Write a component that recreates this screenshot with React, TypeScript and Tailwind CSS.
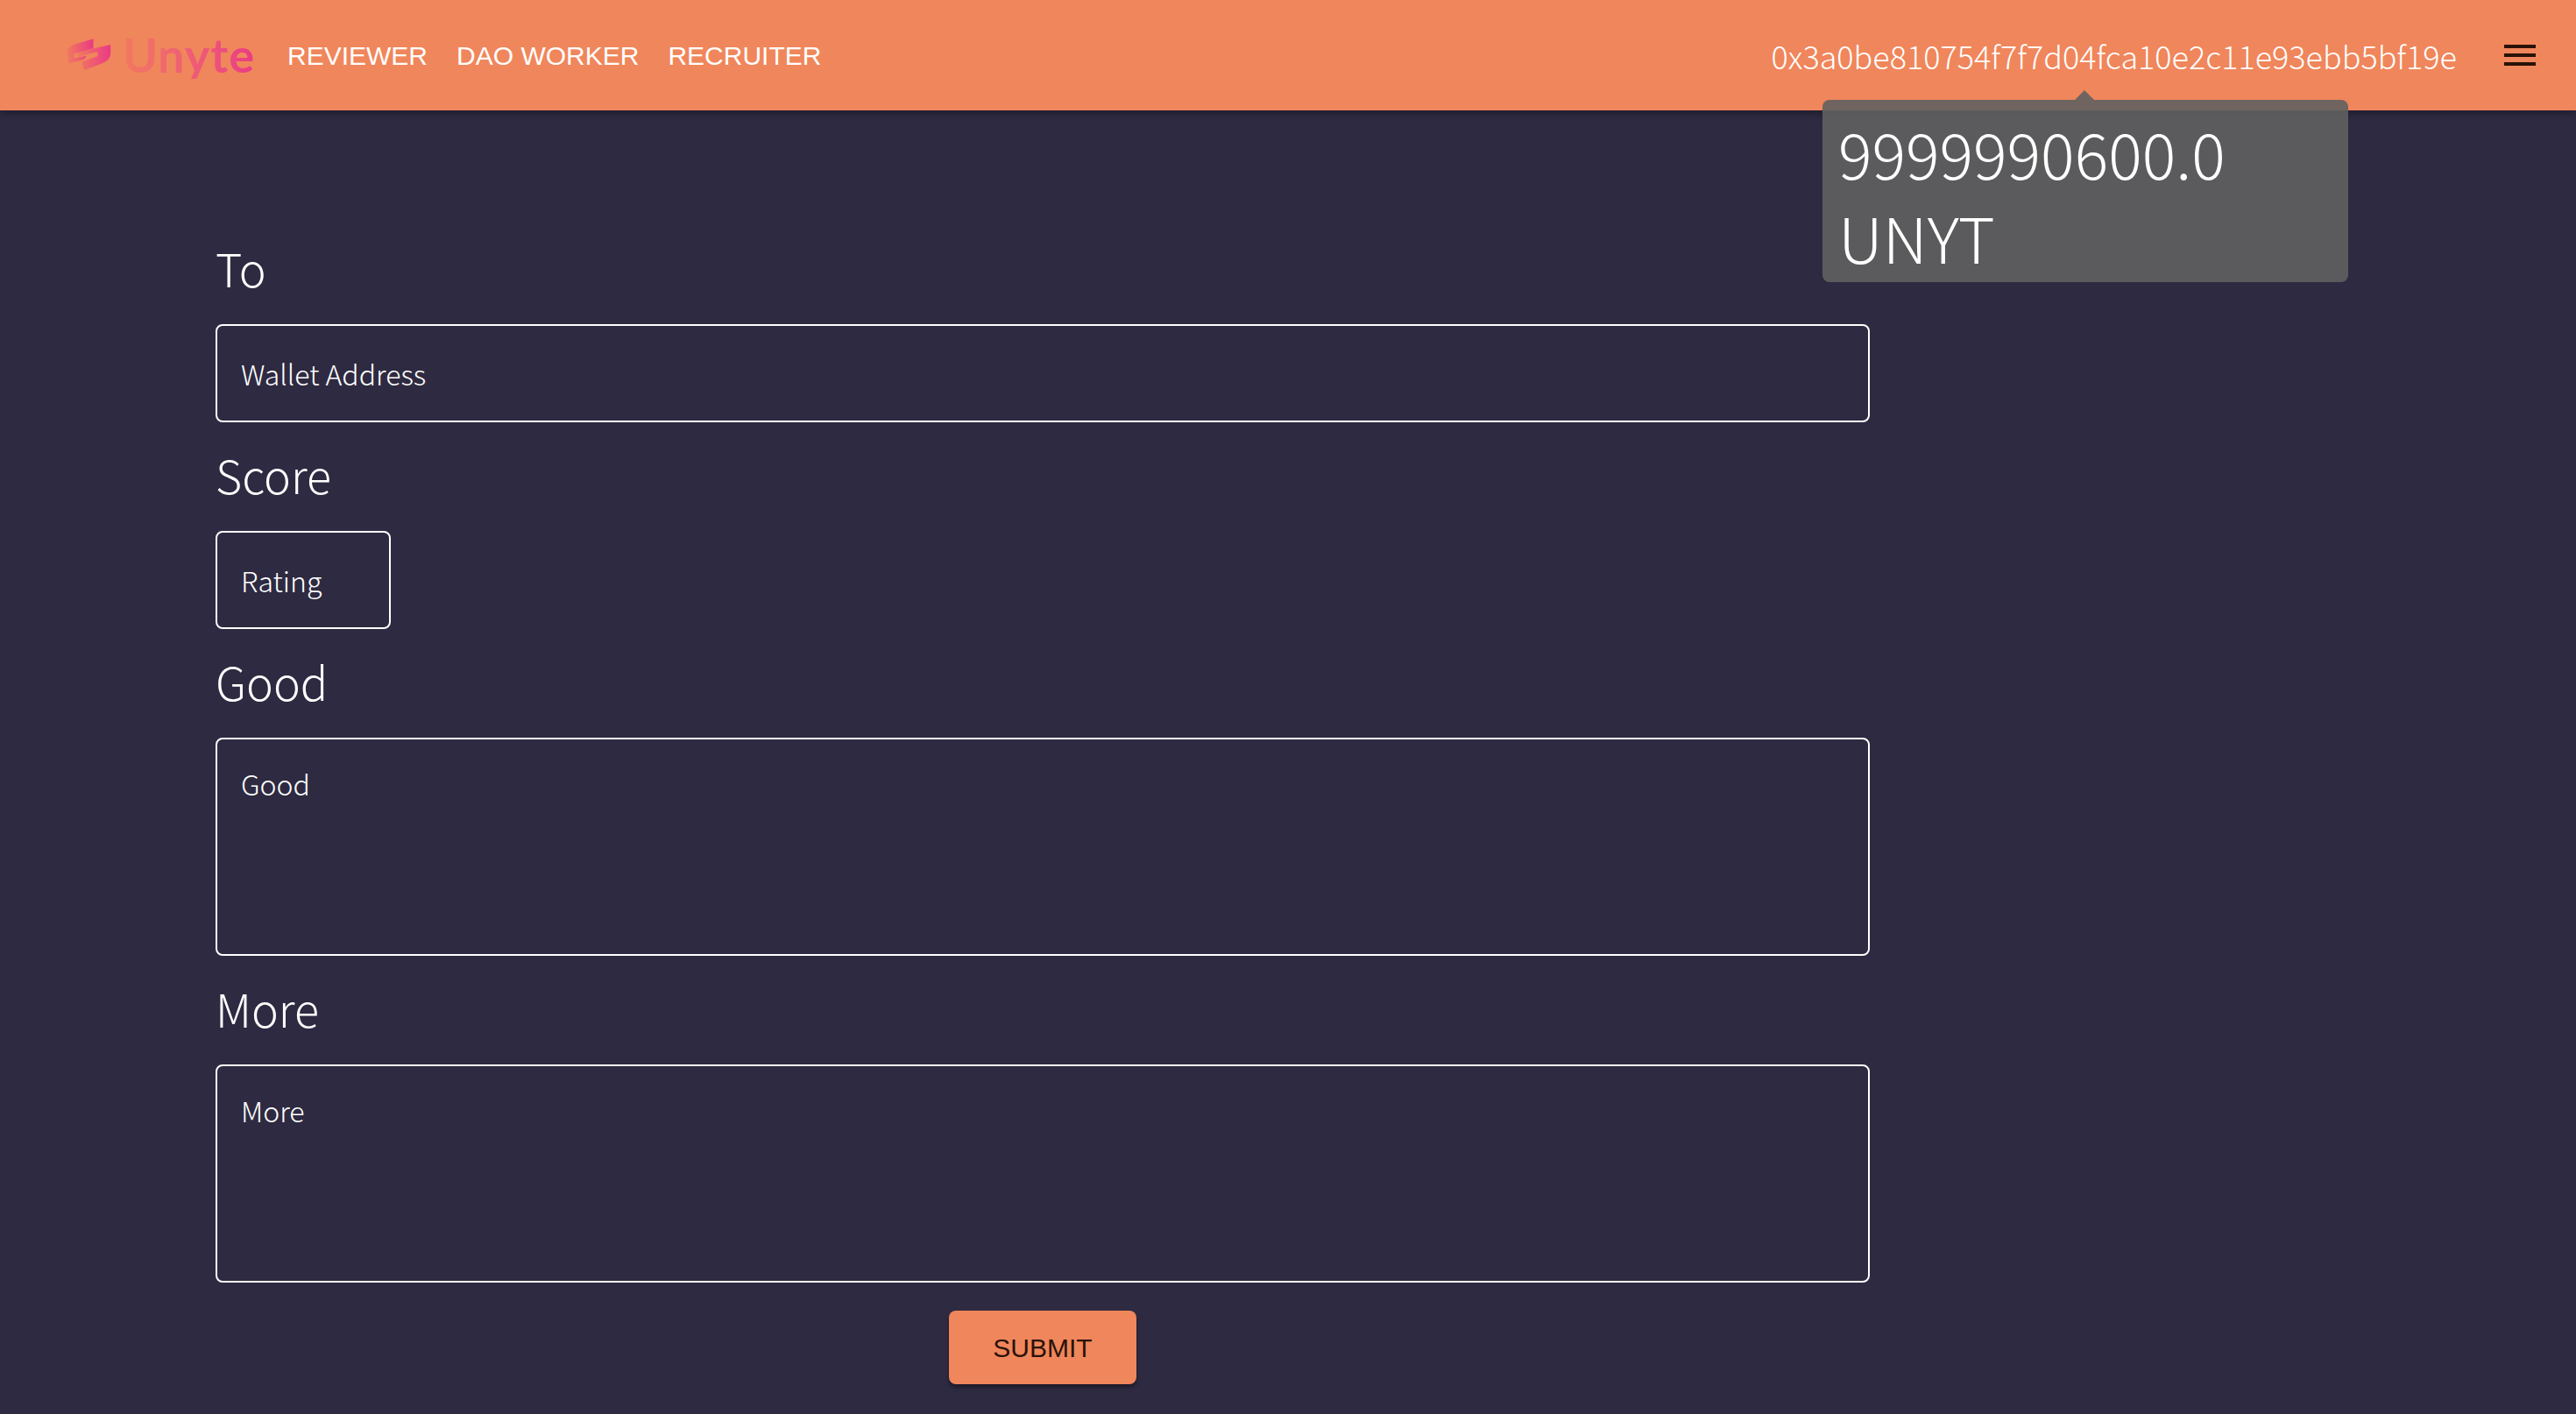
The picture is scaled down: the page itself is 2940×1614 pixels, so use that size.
import React from 'react';

const bodyFont = "font-['Noto_Sans_CJK_JP',sans-serif] font-light";

function Logo() {
  return (
    <div className="flex items-center gap-[12px] w-[216px]">
      <svg width="62" height="46" viewBox="0 0 62 46" fill="none">
        <defs>
          <linearGradient id="logoA" x1="0" y1="0" x2="1" y2="0">
            <stop offset="0" stopColor="#f2795f" />
            <stop offset="1" stopColor="#ea3a85" />
          </linearGradient>
        </defs>
        <path d="M37 1 L13 8 C6 10 2 14 2 20 L4 34 L23 29 C26 28 28 26 27 24 L12 27 C10 27 10 22 12 21 L37 14 Z" fill="url(#logoA)" />
        <path d="M60 9 L38 14 L20 19 C16 20 15 24 17 25 L40 19 C44 18 44 24 41 25 L24 31 C21 32 22 38 25 43 L48 34 C56 31 60 26 60 20 Z" fill="url(#logoA)" />
      </svg>
      <span className="font-['Lato',sans-serif] font-bold text-[54px] leading-none tracking-[1px] bg-gradient-to-r from-[#f2795f] to-[#ea3a85] bg-clip-text text-transparent">Unyte</span>
    </div>
  );
}

function NavLink({ label }: { label: string }) {
  return <span className="font-['Liberation_Sans',sans-serif] text-[30px] text-white whitespace-nowrap">{label}</span>;
}

function Field({ label, placeholder, narrow, tall }: { label: string; placeholder: string; narrow?: boolean; tall?: boolean }) {
  return (
    <div className="flex flex-col">
      <label className={`${bodyFont} text-[52px] leading-[72px] text-white`}>{label}</label>
      <div
        className={`mt-[28px] border-2 border-white rounded-[8px] px-[27px] text-white text-[32px] ${bodyFont} ${narrow ? 'w-[200px]' : 'w-full'} ${tall ? 'h-[249px] pt-[28px] leading-[44px]' : 'h-[112px] flex items-center'}`}
      >
        {placeholder}
      </div>
    </div>
  );
}

export default function App() {
  return (
    <div className="relative min-h-[1614px] h-[1614px] overflow-hidden bg-[#2e2a41]">
      <header className="h-[126px] bg-[#f0865b] shadow-[0_4px_8px_rgba(0,0,0,0.3)] flex items-center pl-[75px] pr-[46px]">
        <Logo />
        <nav className="flex gap-[33px] ml-[37px]">
          <NavLink label="REVIEWER" />
          <NavLink label="DAO WORKER" />
          <NavLink label="RECRUITER" />
        </nav>
        <span className={`ml-auto ${bodyFont} text-[36px] text-white`}>0x3a0be810754f7f7d04fca10e2c11e93ebb5bf19e</span>
        <div className="ml-[54px] flex flex-col gap-[6px] w-[36px]">
          <div className="h-[4px] bg-[#2a1208]" />
          <div className="h-[4px] bg-[#2a1208]" />
          <div className="h-[4px] bg-[#2a1208]" />
        </div>
      </header>

      <div className="absolute left-[2080px] top-[114px] w-[600px] h-[208px] bg-[#616161]/90 rounded-[8px] px-[18px] pt-[12px]">
        <div className="absolute left-[288px] top-[-11px] w-0 h-0 border-l-[11px] border-r-[11px] border-b-[11px] border-l-transparent border-r-transparent border-b-[#616161]/90" />
        <div className={`${bodyFont} text-[72px] leading-[96px] text-white`}>9999990600.0 UNYT</div>
      </div>

      <main className="w-[1888px] ml-[246px] pt-[144px] flex flex-col gap-[24px]">
        <Field label="To" placeholder="Wallet Address" />
        <Field label="Score" placeholder="Rating" narrow />
        <Field label="Good" placeholder="Good" tall />
        <Field label="More" placeholder="More" tall />
        <div className="flex justify-center mt-[8px]">
          <button className="w-[214px] h-[84px] bg-[#f0865b] rounded-[8px] shadow-[0_4px_4px_rgba(0,0,0,0.35)] font-['Liberation_Sans',sans-serif] text-[30px] text-[#2a1208]">SUBMIT</button>
        </div>
      </main>
    </div>
  );
}
